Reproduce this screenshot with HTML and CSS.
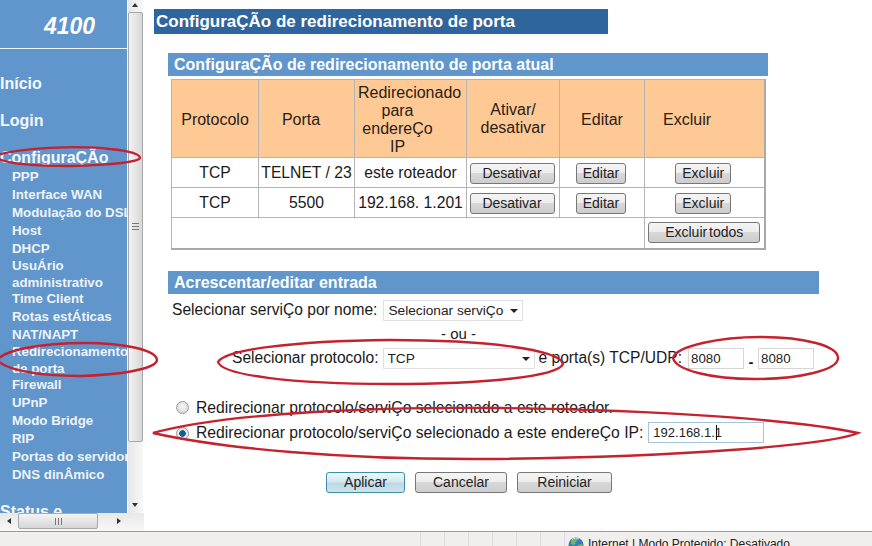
FILE: index.html
```html
<!DOCTYPE html>
<html lang="pt">
<head>
<meta charset="utf-8">
<title>Configuração de redirecionamento de porta</title>
<link rel="stylesheet" href="styles.css">
</head>
<body>
<div class="app">
  <div class="frames">
    <aside class="side">
      <div class="side-top">
        <nav class="nav">
          <div class="model">4100</div>
          <a class="top first">Início</a>
          <a class="top">Login</a>
          <a class="top">ConfiguraÇÃo</a>
          <ul class="subs">
            <li>PPP</li>
            <li>Interface WAN</li>
            <li>Modulação do DSL</li>
            <li>Host</li>
            <li>DHCP</li>
            <li class="two">UsuÁrio<br>administrativo</li>
            <li>Time Client</li>
            <li>Rotas estÁticas</li>
            <li>NAT/NAPT</li>
            <li class="two">Redirecionamento<br>de porta</li>
            <li>Firewall</li>
            <li>UPnP</li>
            <li>Modo Bridge</li>
            <li>RIP</li>
            <li>Portas do servidor</li>
            <li>DNS dinÂmico</li>
          </ul>
          <a class="top status">Status e</a>
        </nav>
        <div class="vbar">
          <span class="arrow up"></span>
          <div class="vthumb"><span class="grip"></span></div>
          <span class="arrow down"></span>
        </div>
      </div>
      <div class="hbar">
        <span class="arrow left"></span>
        <div class="hthumb"><span class="hgrip"></span></div>
        <span class="arrow right"></span>
      </div>
    </aside>
    <main class="main">
      <h1 class="title">ConfiguraÇÃo de redirecionamento de porta</h1>
      <section class="sec1">
        <h2 class="bar w600">ConfiguraÇÃo de redirecionamento de porta atual</h2>
        <table class="grid">
          <colgroup><col class="c1"><col class="c2"><col class="c3"><col class="c4"><col class="c5"><col class="c6"></colgroup>
          <tr class="head">
            <th>Protocolo</th><th class="prt">Porta</th><th class="red">Redirecionado<br>para<br>endereÇo<br>IP</th><th class="atv">Ativar/<br>desativar</th><th>Editar</th><th class="exc">Excluir</th>
          </tr>
          <tr class="row">
            <td>TCP</td><td>TELNET / 23</td><td>este roteador</td>
            <td><button class="btn b-des">Desativar</button></td><td><button class="btn b-edi">Editar</button></td><td><button class="btn b-exc">Excluir</button></td>
          </tr>
          <tr class="row">
            <td>TCP</td><td>5500</td><td>192.168. 1.201</td>
            <td><button class="btn b-des">Desativar</button></td><td><button class="btn b-edi">Editar</button></td><td><button class="btn b-exc">Excluir</button></td>
          </tr>
          <tr class="row last">
            <td colspan="5"></td><td><button class="btn b-all">Excluir todos</button></td>
          </tr>
        </table>
      </section>
      <section class="sec2">
        <h2 class="bar w651">Acrescentar/editar entrada</h2>
        <div class="line svc">
          <span class="lbl">Selecionar serviÇo por nome:</span>
          <span class="sel sel-svc"><select><option>Selecionar serviÇo</option></select></span>
        </div>
        <div class="or">- ou -</div>
        <div class="line proto">
          <span class="lbl">Selecionar protocolo:</span>
          <span class="sel sel-proto"><select><option>TCP</option></select></span>
          <span class="lbl ports">e porta(s) TCP/UDP:</span>
          <input class="txt port first-port" value="8080">
          <span class="dash">-</span>
          <input class="txt port" value="8080">
        </div>
        <label class="line radio r1"><input class="rd" type="radio" name="d"><span>Redirecionar protocolo/serviÇo selecionado a este roteador.</span></label>
        <label class="line radio r2"><input class="rd" type="radio" name="d" checked><span>Redirecionar protocolo/serviÇo selecionado a este endereÇo IP:</span>
          <span class="ipwrap"><input class="txt ip" value="192.168.1.1"></span></label>
        <div class="actions">
          <button class="btn act default">Aplicar</button>
          <button class="btn act cancel">Cancelar</button>
          <button class="btn act reset">Reiniciar</button>
        </div>
      </section>
    </main>
  </div>
  <footer class="statusbar">
    <span class="cell"></span><span class="cell"></span><span class="cell"></span><span class="cell"></span><span class="cell"></span><span class="cell"></span>
    <span class="zone">
      <svg class="globe" width="16" height="16" viewBox="0 0 16 16"><circle cx="8" cy="8" r="7.5" fill="#2f7fb8"/><path d="M3 4c2-2 5-3 7-2l-1 2-2 1 1 2-3 1-2-1zM10 8l4-1 1 2-2 4-2 1-1-3z" fill="#7cb55a"/><path d="M4 2.5C6 1 9 .8 11 2" stroke="#cfe6f5" fill="none"/></svg>
      Internet | Modo Protegido: Desativado
    </span>
  </footer>
  <svg class="marks" width="872" height="546" viewBox="0 0 872 546" aria-hidden="true">
    <path d="M-3 155C20 148 80 145 110 149C130 151 140 154 140 158C138 162 110 165 70 166C30 166 5 163-3 158"/>
    <path d="M-3 360C5 350 40 343 85 343C125 343 156 350 157 360C156 369 120 375 80 376C35 376 5 369-3 360Z"/>
    <path d="M218 362C225 350 290 341 390 340C490 340 560 350 563 364C558 376 490 384 390 384C290 384 222 375 218 362Z"/>
    <path d="M673 358C676 346 720 337 760 337C805 337 838 346 838 358C838 370 800 379 755 379C710 379 676 370 673 358Z"/>
    <path d="M153 433C230 412 380 407 500 408C660 410 800 420 858 433C830 445 680 457 490 459C340 460 220 448 153 433Z"/>
  </svg>
</div>
</body>
</html>
```
FILE: styles.css
```css
* { box-sizing: border-box; }
html, body { margin: 0; padding: 0; background: #fff; }
body { font-family: "Liberation Sans", Arial, sans-serif; color: #1a1a1a; overflow: hidden; }
.app { position: relative; width: 872px; height: 546px; display: flex; flex-direction: column; overflow: hidden; }
.frames { display: flex; height: 531px; }

/* left frame */
.side { width: 144px; flex: none; display: flex; flex-direction: column; }
.side-top { display: flex; height: 513px; }
.nav { width: 128px; height: 513px; overflow: hidden; background: #6096cb; color: #fff; white-space: nowrap; border-right: 1px solid #f4f4f4; }
.model { height: 49px; padding: 13px 0 0 12px; text-align: center; font: italic bold 23px/26px "Liberation Sans", Arial, sans-serif; border-bottom: 1px solid #f2f6fa; }
.top { display: block; font-size: 16px; line-height: 20px; font-weight: bold; margin-top: 17px; color: #f4f7fb; }
.top.first { margin-top: 25px; }
.subs { list-style: none; margin: 0; padding: 0 0 0 12px; font-size: 13.3px; font-weight: bold; line-height: 18px; color: #eef3f9; }
.subs li.two { line-height: 17px; margin: -1px 0; }
.status { margin-top: 18px; }

.vbar { width: 15px; height: 513px; background: linear-gradient(90deg, #e6e6e6, #f8f8f8); display: flex; flex-direction: column; align-items: stretch; position: relative; }
.vthumb { margin-top: 12px; height: 430px; background: linear-gradient(90deg, #f3f3f3, #d8d8d8); border: 1px solid #a8a8a8; border-radius: 2px; display: flex; justify-content: center; padding-top: 210px; }
.grip { width: 7px; height: 7px; border-top: 1px solid #777; border-bottom: 1px solid #777; position: relative; }
.grip::after { content: ""; display: block; height: 1px; margin-top: 2px; background: #777; }
.arrow { display: block; width: 0; height: 0; border: 3px solid transparent; position: absolute; }
.arrow.up { border-bottom: 4px solid #333; top: 0; left: 4px; }
.arrow.down { border-top: 4px solid #333; bottom: 3px; left: 4px; }
.hbar { position: relative; width: 144px; height: 18px; background: linear-gradient(#e8e8e8, #f8f8f8); }
.hthumb { margin-left: 18px; width: 80px; height: 16px; background: linear-gradient(#f4f4f4, #d6d6d6); border: 1px solid #a8a8a8; border-radius: 2px; display: flex; justify-content: center; align-items: center; }
.hgrip { width: 7px; height: 7px; border-left: 1px solid #777; border-right: 1px solid #777; background: linear-gradient(90deg, transparent 2px, #777 2px, #777 3px, transparent 3px); }
.arrow.left { border-right: 4px solid #333; top: 5px; left: 4px; }
.arrow.right { border-left: 4px solid #333; top: 5px; left: 117px; }

/* main frame */
.main { flex: 1; padding: 9px 0 0 10px; }
.title { margin: 0; width: 454px; height: 25px; padding: 0 0 0 2px; background: #2f659c; color: #fff; font-size: 17px; line-height: 25px; font-weight: bold; white-space: nowrap; }
.sec1 { margin: 19px 0 0 14px; }
.bar { margin: 0; height: 23px; padding-left: 6px; background: #6096cb; color: #fff; font-size: 16px; line-height: 23px; font-weight: bold; white-space: nowrap; }
.w600 { width: 600px; }
.w651 { width: 651px; }
.grid { margin: 3px 0 0 3px; width: 593px; table-layout: fixed; border-collapse: collapse; border: 2px solid #a9a9a9; border-top-width: 1px; border-left-width: 1px; font-size: 15.7px; }
.c1 { width: 87px; } .c2 { width: 96px; } .c3 { width: 112px; } .c4 { width: 93px; } .c5 { width: 85px; } .c6 { width: 120px; }
.grid th, .grid td { border: 1px solid #b4b4b4; padding: 0; text-align: center; font-weight: normal; white-space: nowrap; }
.head th { background: #ffc996; height: 78px; line-height: 18px; color: #2a2013; font-size: 16px; padding-top: 3px; }
.grid .prt { padding-right: 11px; }
.grid .red { padding: 3px 29px 0 3px; }
.grid .atv { padding-top: 1px; }
.grid .exc { text-align: left; padding-left: 18px; }
.row td { height: 30px; padding-top: 1px; }
.row.last td { height: 31px; padding-top: 0; }
.row.last td:first-child { border-right: 1px solid #b4b4b4; }

.btn { display: inline-block; height: 21px; padding: 0; font: 14px/17px "Liberation Sans", Arial, sans-serif; color: #222; background: linear-gradient(#f4f4f4 0, #ededed 45%, #d8d8d8 50%, #cdcdcd 100%); border: 1px solid #777; border-radius: 3px; vertical-align: middle; }
.b-des { width: 85px; margin-left: -2px; }
.b-edi { width: 50px; margin-left: -2px; }
.b-exc { width: 56px; margin-left: -2px; }
.b-all { width: 112px; word-spacing: -2px; }

.sec2 { margin: 21px 0 0 14px; }
.line { display: flex; align-items: center; font-size: 15.7px; white-space: nowrap; }
.svc { margin-top: 6px; height: 21px; padding-left: 4px; font-size: 15.6px; }
.sel { display: block; position: relative; height: 21px; }
.sel select { appearance: none; -webkit-appearance: none; width: 100%; height: 21px; padding: 0 0 0 4px; border: 1px solid #e0e0e0; background: #fff; font: 13.7px "Liberation Sans", Arial, sans-serif; color: #222; border-radius: 0; }
.sel::after { content: ""; position: absolute; right: 5px; top: 9px; border: 4px solid transparent; border-top-color: #222; border-bottom-width: 0; }
.sel-svc { width: 140px; margin-left: 6px; }
.sel-proto { width: 152px; margin-left: 4px; }
.or { height: 19px; margin-top: 3px; padding-left: 273px; font-size: 15px; line-height: 19px; }
.proto { margin-top: 5px; height: 21px; padding-left: 64px; font-size: 15.6px; }
.ports { margin-left: 4px; }
.txt { height: 21px; border: 1px solid #d6d6d6; padding: 0 0 0 2px; font: 13.3px "Liberation Sans", Arial, sans-serif; color: #222; background: #fff; outline: none; }
.port { width: 56px; }
.first-port { margin-left: 6px; }
.dash { width: 14px; text-align: center; font-size: 15px; font-weight: bold; padding-top: 6px; }
.rd { appearance: none; -webkit-appearance: none; width: 13px; height: 13px; margin: 0 7px 0 8px; border-radius: 50%; border: 1px solid #9a9a9a; background: radial-gradient(circle at 50% 40%, #f8f8f8, #cfcfcf); flex: none; }
.rd:checked { background: radial-gradient(circle, #0f5f96 0 3px, #dbe6ee 3.5px, #f0f0f0 100%); }
.r1 { margin-top: 29px; height: 20px; }
.r2 { margin-top: 5px; height: 21px; }
.ipwrap { display: block; position: relative; margin: -2px 0 0 5px; }
.ip { width: 116px; border-color: #a5c4da; display: block; padding-left: 4px; font-size: 13px; }
.ipwrap::after { content: ""; position: absolute; left: 68px; top: 3px; width: 1px; height: 15px; background: #111; }
.actions { display: flex; margin-top: 28px; padding-left: 158px; }
.act { height: 21px; font-size: 14px; }
.default { width: 79px; border-color: #3c8fa8; background: linear-gradient(#eef6fa, #d3e7f0 48%, #bcd7e4 52%, #cfe4ec); }
.cancel { width: 92px; margin-left: 10px; }
.reset { width: 95px; margin-left: 10px; }

/* browser status bar */
.statusbar { height: 15px; flex: none; display: flex; padding-left: 420px; background: #f1eeee; border-top: 1px solid #9a9a9a; overflow: hidden; }
.cell { width: 24px; height: 15px; border-left: 1px solid #dcdcdc; flex: none; }
.zone { display: flex; align-items: flex-start; gap: 4px; height: 19px; padding: 5px 0 0 3px; border-left: 1px solid #dcdcdc; font: 12px/15px "Liberation Sans", Arial, sans-serif; color: #222; white-space: nowrap; }
.globe { flex: none; margin: 0; }

/* hand-drawn red marks over the screenshot */
.marks { position: absolute; left: 0; top: 0; pointer-events: none; }
.marks path { fill: none; stroke: #c5212f; stroke-width: 2.4; }
```
